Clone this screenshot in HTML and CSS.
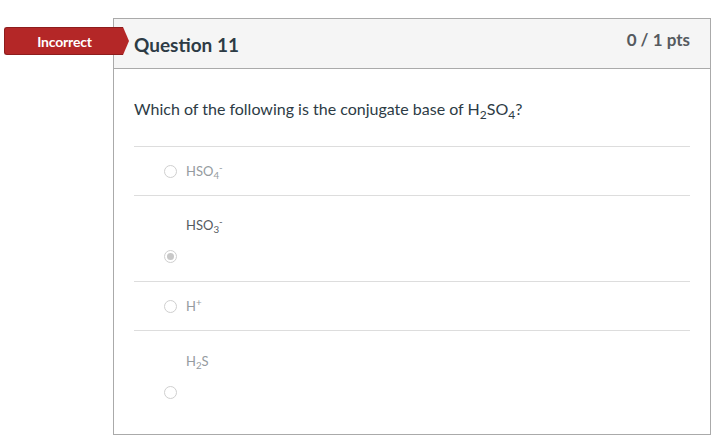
FILE: index.html
```html
<!DOCTYPE html>
<html>
<head>
<meta charset="utf-8">
<link rel="stylesheet" href="styles.css">
</head>
<body>
<div class="page">
  <div class="quiz">
    <div class="badge"><span class="badge-text">Incorrect</span></div>
    <div class="header">
      <div class="title">Question 11</div>
      <div class="pts">0 / 1 pts</div>
    </div>
    <div class="body">
      <p class="question">Which of the following is the conjugate base of H<sub>2</sub>SO<sub>4</sub>?</p>
      <div class="answers">
        <div class="answer inline">
          <span class="radio"></span>
          <span class="label">HSO<sub>4</sub><sup>-</sup></span>
        </div>
        <div class="answer stacked selected a2">
          <span class="label">HSO<sub>3</sub><sup>-</sup></span>
          <span class="radio checked"></span>
        </div>
        <div class="answer inline">
          <span class="radio"></span>
          <span class="label">H<sup>+</sup></span>
        </div>
        <div class="answer stacked a4">
          <span class="label">H<sub>2</sub>S</span>
          <span class="radio"></span>
        </div>
      </div>
    </div>
  </div>
</div>
</body>
</html>
```

FILE: styles.css
```css
* { box-sizing: border-box; }
html, body { margin: 0; padding: 0; background: #fff; }
body { font-family: Lato, "Open Sans", sans-serif; color: #2d3b45; }

.page { padding: 18px 0 0 113px; }

.quiz {
  position: relative;
  width: 598px;
  border: 1px solid #aaaaaa;
  background: #fff;
}

.badge {
  position: absolute;
  left: -110px;
  top: 8px;
  width: 119px;
  height: 28px;
  background: #b42727;
  border: 1px solid #8e1d1d;
  border-right: none;
  border-radius: 3px 0 0 3px;
  display: flex;
  align-items: center;
  justify-content: center;
}
.badge::after {
  content: "";
  position: absolute;
  right: -6px;
  top: -1px;
  width: 0;
  height: 0;
  border-top: 14px solid transparent;
  border-bottom: 14px solid transparent;
  border-left: 6px solid #b42727;
}
.badge-text {
  color: #fff;
  font-weight: 700;
  font-size: 14px;
  letter-spacing: -0.2px;
  margin-left: 1px;
}

.header {
  height: 50px;
  background: #f5f5f5;
  border-bottom: 1px solid #aaaaaa;
  display: flex;
  justify-content: space-between;
  align-items: flex-start;
  padding: 0 20px;
}
.title {
  font-size: 19px;
  font-weight: 700;
  line-height: 24px;
  margin-top: 14px;
  color: #2d3b45;
}
.pts {
  font-size: 17px;
  font-weight: 700;
  line-height: 22px;
  margin-top: 10px;
  color: #555a5f;
}

.body { padding: 0 20px; }

.question {
  margin: 0;
  padding-top: 30px;
  font-size: 16px;
  line-height: 20px;
  color: #2d3b45;
  height: 77px;
}

sub, sup { font-size: 75%; line-height: 0; position: relative; vertical-align: baseline; }
sub { bottom: -0.3em; }
sup { top: -0.5em; }

.answer {
  border-top: 1px solid #dddddd;
  font-size: 13px;
  line-height: 20px;
  color: #959ba0;
}
.answer.inline {
  height: 49px;
  display: flex;
  align-items: center;
  padding-left: 30px;
}
.answer.inline .label { margin-left: 9px; }
.answer.stacked {
  display: flex;
  flex-direction: column;
  align-items: flex-start;
  padding-left: 30px;
}
.answer.stacked .label { margin-left: 22px; }
.answer.a2 { height: 86px; padding-top: 19px; }
.answer.a2 .radio { margin-top: 15px; }
.answer.a4 { height: 104px; padding-top: 20px; }
.answer.a4 .radio { margin-top: 15px; }
.answer.selected { color: #555a5f; }

.radio {
  display: inline-block;
  width: 13px;
  height: 13px;
  border: 1px solid #cfcfcf;
  border-radius: 50%;
  background: #fff;
  flex: none;
  position: relative;
}
.radio.checked::after {
  content: "";
  position: absolute;
  left: 2px;
  top: 2px;
  width: 7px;
  height: 7px;
  border-radius: 50%;
  background: #c8c8c8;
}
```
